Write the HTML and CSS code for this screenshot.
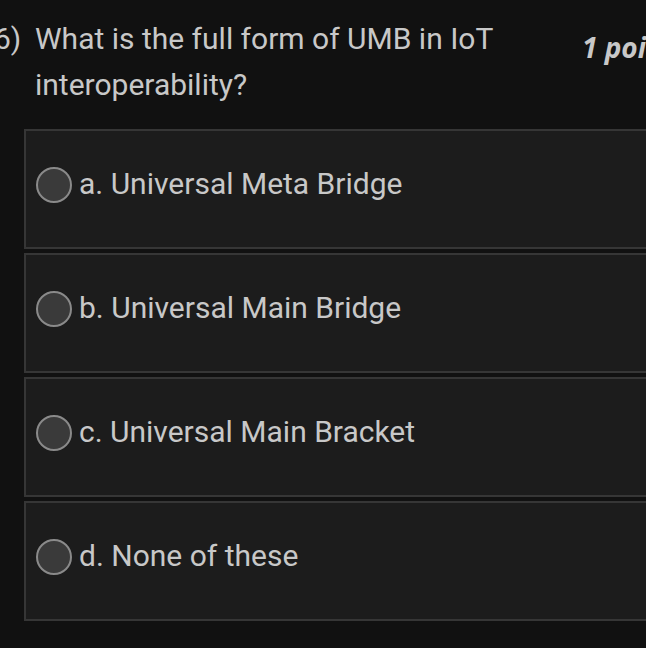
FILE: index.html
```html
<!DOCTYPE html>
<html>
<head>
<meta charset="utf-8">
<link rel="stylesheet" href="styles.css">
</head>
<body>
<div class="page">
  <div class="question">
    <div class="q-text">
      <span class="q-num">6)</span>
      <span class="q-body">What is the full form of UMB in IoT interoperability?</span>
    </div>
    <div class="points">1 point</div>
  </div>
  <div class="options">
    <label class="option"><span class="radio"></span><span class="opt-text">a. Universal Meta Bridge</span></label>
    <label class="option"><span class="radio"></span><span class="opt-text">b. Universal Main Bridge</span></label>
    <label class="option"><span class="radio"></span><span class="opt-text">c. Universal Main Bracket</span></label>
    <label class="option"><span class="radio"></span><span class="opt-text">d. None of these</span></label>
  </div>
</div>
</body>
</html>
```
FILE: styles.css
```css
html, body {
  margin: 0;
  padding: 0;
  background: #111111;
  overflow: hidden;
}
.page {
  width: 646px;
  height: 648px;
  overflow: hidden;
  font-family: Roboto, "Liberation Sans", sans-serif;
  color: #c8c8c8;
}
.question {
  display: flex;
  align-items: flex-start;
  padding-top: 16px;
  height: 112px;
  box-sizing: border-box;
  white-space: nowrap;
}
.q-text {
  display: flex;
  width: 520px;
  flex: none;
  margin-left: -6px;
}
.q-num {
  font-size: 30px;
  line-height: 46px;
  width: 41px;
  flex: none;
}
.q-body {
  font-size: 30px;
  line-height: 46px;
  white-space: normal;
  width: 475px;
}
.points {
  margin-left: 68px;
  margin-top: 9px;
  font-size: 28px;
  line-height: 45px;
  font-weight: 700;
  font-style: italic;
  font-family: "Open Sans", Roboto, sans-serif;
  color: #c8c8c8;
}
.options {
  display: flex;
  flex-direction: column;
  gap: 4px;
  margin-left: 24px;
  margin-top: 17px;
  width: 660px;
}
.option {
  display: flex;
  align-items: center;
  gap: 7px;
  height: 120px;
  box-sizing: border-box;
  border: 2px solid #363636;
  background: #1c1c1c;
  padding: 0 0 8px 10px;
}
.radio {
  width: 36px;
  height: 36px;
  box-sizing: border-box;
  border-radius: 50%;
  border: 2px solid #8a8a8a;
  background: #3a3a3a;
  flex: none;
}
.opt-text {
  font-size: 30px;
  line-height: 35px;
  margin-bottom: 4px;
  color: #c8c8c8;
}
```
